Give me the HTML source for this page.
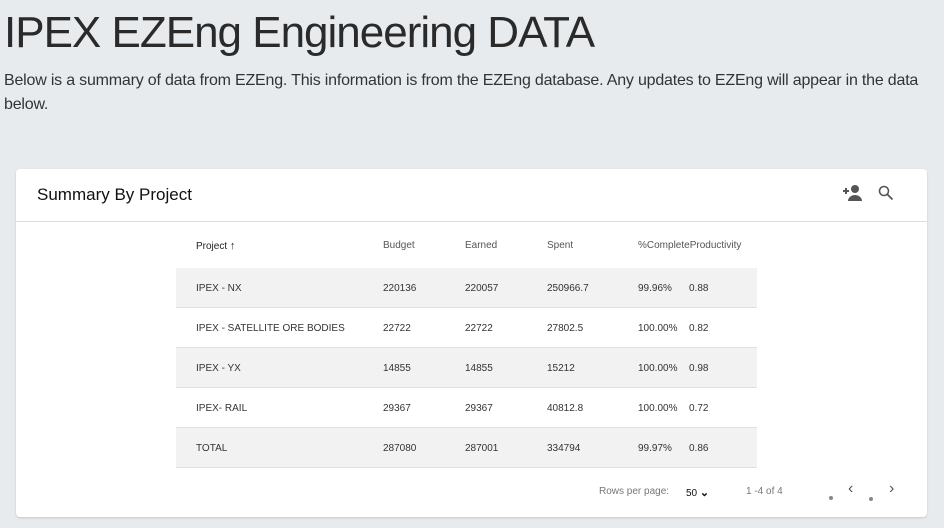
<!DOCTYPE html>
<html><head><style>
body{margin:0;width:944px;height:528px;background:#e8ebee;font-family:"Liberation Sans",sans-serif;overflow:hidden;position:relative;color:#222}
h1{position:absolute;left:4px;top:8px;margin:0;font-weight:normal;font-size:44px;letter-spacing:-1px;color:#2a2a2a;white-space:nowrap}
p{position:absolute;left:4px;top:69px;margin:0;font-size:16px;line-height:24px;width:930px;color:#333;letter-spacing:-0.2px}
.card{position:absolute;left:16px;top:169px;width:911px;height:348px;background:#fff;border-radius:4px;box-shadow:0 1px 2px rgba(0,0,0,.15)}
.hd{height:52px;border-bottom:1px solid #ddd;position:relative}
.hd span{position:absolute;left:21px;top:16px;font-size:17px;color:#111}
.t{position:absolute;left:160px;top:52px;width:581px;font-size:10px;color:#333}
.r{height:39px;border-bottom:1px solid #e0e0e0;position:relative}
.r.g{background:#f2f2f2}
.r div{position:absolute;top:15px}
.h div{color:#555;top:19px}
.h{height:47px;border-bottom:none}
.c1{left:20px}.c2{left:207px}.c3{left:289px}.c4{left:371px}.c5{left:462px}.c6{left:513px}
.ft{position:absolute;top:317px;font-size:10px;color:#777}
</style></head><body>
<h1>IPEX EZEng Engineering DATA</h1>
<p>Below is a summary of data from EZEng. This information is from the EZEng database. Any updates to EZEng will appear in the data below.</p>
<div class="card">
<div class="hd"><span>Summary By Project</span>
<svg style="position:absolute;left:826px;top:15px" width="22" height="18" viewBox="0 0 22 18"><path d="M1 7h6M4 4v6" stroke="#555" stroke-width="2"/><circle cx="13" cy="5" r="4" fill="#555"/><path d="M6 17c0-4 4-6 7-6s7 2 7 6z" fill="#555"/></svg>
<svg style="position:absolute;left:862px;top:16px" width="16" height="16" viewBox="0 0 16 16"><circle cx="6" cy="6" r="4.5" fill="none" stroke="#555" stroke-width="1.6"/><path d="M9.5 9.5l5 5" stroke="#555" stroke-width="1.8"/></svg>
</div>
<div class="t">
<div class="r h"><div class="c1" style="color:#222">Project <span style="font-size:11px">↑</span></div><div class="c2">Budget</div><div class="c3">Earned</div><div class="c4">Spent</div><div class="c5" style="left:462px">%CompleteProductivity</div></div>
<div class="r g"><div class="c1">IPEX - NX</div><div class="c2">220136</div><div class="c3">220057</div><div class="c4">250966.7</div><div class="c5">99.96%</div><div class="c6">0.88</div></div>
<div class="r"><div class="c1">IPEX - SATELLITE ORE BODIES</div><div class="c2">22722</div><div class="c3">22722</div><div class="c4">27802.5</div><div class="c5">100.00%</div><div class="c6">0.82</div></div>
<div class="r g"><div class="c1">IPEX - YX</div><div class="c2">14855</div><div class="c3">14855</div><div class="c4">15212</div><div class="c5">100.00%</div><div class="c6">0.98</div></div>
<div class="r"><div class="c1">IPEX- RAIL</div><div class="c2">29367</div><div class="c3">29367</div><div class="c4">40812.8</div><div class="c5">100.00%</div><div class="c6">0.72</div></div>
<div class="r g"><div class="c1">TOTAL</div><div class="c2">287080</div><div class="c3">287001</div><div class="c4">334794</div><div class="c5">99.97%</div><div class="c6">0.86</div></div>
</div>
<div class="ft" style="left:583px">Rows per page:</div>
<div class="ft" style="left:670px;color:#111">50 <b style="font-size:11px">⌄</b></div>
<div class="ft" style="left:730px">1 -4 of 4</div>
<div style="position:absolute;left:813px;top:327px;width:4px;height:4px;border-radius:2px;background:#888"></div>
<div style="position:absolute;left:853px;top:328px;width:4px;height:4px;border-radius:2px;background:#888"></div>
<div class="ft" style="left:832px;top:311px;font-size:16px;color:#555">‹</div>
<div class="ft" style="left:873px;top:311px;font-size:16px;color:#555">›</div>
</div>
</body></html>
